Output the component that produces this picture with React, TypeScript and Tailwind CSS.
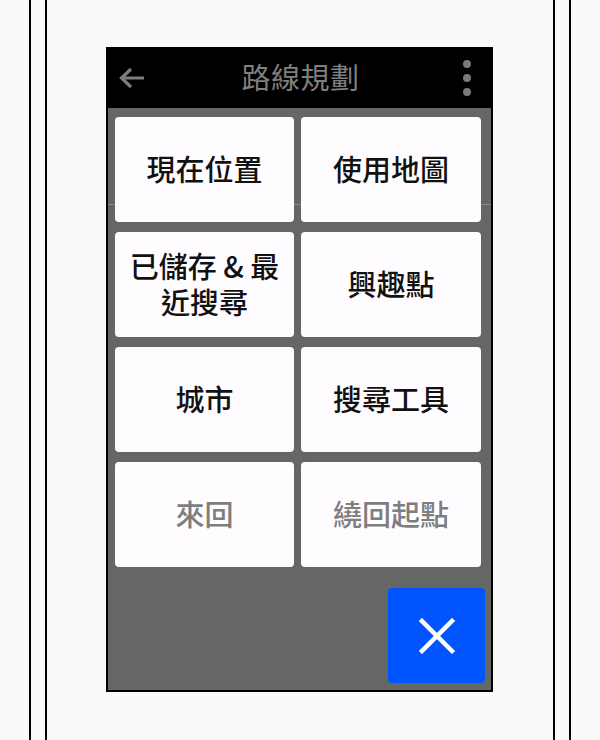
import React from "react";

const cells: { lines: string[]; disabled?: boolean }[] = [
  { lines: ["現在位置"] },
  { lines: ["使用地圖"] },
  { lines: ["已儲存 & 最", "近搜尋"] },
  { lines: ["興趣點"] },
  { lines: ["城市"] },
  { lines: ["搜尋工具"] },
  { lines: ["來回"], disabled: true },
  { lines: ["繞回起點"], disabled: true },
];

export default function App() {
  return (
    <div
      className="w-[600px] h-[740px] bg-[#fafafa] overflow-hidden"
      style={{ fontFamily: '"Noto Sans CJK TC", "Noto Sans", sans-serif' }}
    >
      <div className="mx-[29px] h-full border-x-2 border-black px-[14px]">
        <div className="h-full border-x-2 border-black pt-[47px]">
          <div className="ml-[59px] w-[387px] h-[645px] flex flex-col bg-black">
            {/* header */}
            <div className="h-[61px] shrink-0 grid grid-cols-[1fr_auto_1fr] items-center pl-[12px] pr-[22px]">
              <svg width="28" height="22" viewBox="0 0 28 22" className="mt-[1px]">
                <path
                  d="M26 11H4M13 2L3.5 11L13 20"
                  fill="none"
                  stroke="#7d7d7d"
                  strokeWidth="3.2"
                />
              </svg>
              <div className="text-[29px] leading-none text-[#7f7f7f] tracking-[0.5px] -mt-[3px] pl-[12px]">
                路線規劃
              </div>
              <div className="flex flex-col gap-[6px] items-end">
                <span className="w-[8px] h-[8px] rounded-full bg-[#7a7a7a]" />
                <span className="w-[8px] h-[8px] rounded-full bg-[#7a7a7a]" />
                <span className="w-[8px] h-[8px] rounded-full bg-[#7a7a7a]" />
              </div>
            </div>
            {/* body */}
            <div className="relative flex-1 flex flex-col bg-[#656764] border-x-2 border-b-2 border-black pl-[7px] pr-[10px] pt-[9px]">
              <div className="absolute left-0 right-0 top-[96px] h-[1px] bg-[#8a8b89]" />
              <div className="relative grid grid-cols-[179px_180px] auto-rows-[105px] gap-x-[7px] gap-y-[10px]">
                {cells.map((c, i) => (
                  <div
                    key={i}
                    className={
                      "rounded-[4px] bg-[#fffcff] flex flex-col items-center justify-center text-center text-[29px] font-medium pb-[4px] " +
                      (c.disabled ? "text-[#7e7e7e]" : "text-[#111111]")
                    }
                  >
                    {c.lines.map((l, j) => (
                      <div key={j} className="leading-[36px] whitespace-nowrap">
                        {l}
                      </div>
                    ))}
                  </div>
                ))}
              </div>
              <div className="flex justify-end mt-[21px] -mr-[4px]">
                <div className="w-[97px] h-[95px] rounded-[4px] bg-[#0055ff] flex items-center justify-center">
                  <svg width="36" height="36" viewBox="0 0 36 36">
                    <path
                      d="M3 3L33 33M33 3L3 33"
                      stroke="#ffffff"
                      strokeWidth="4.5"
                      strokeLinecap="square"
                    />
                  </svg>
                </div>
              </div>
            </div>
          </div>
        </div>
      </div>
    </div>
  );
}
